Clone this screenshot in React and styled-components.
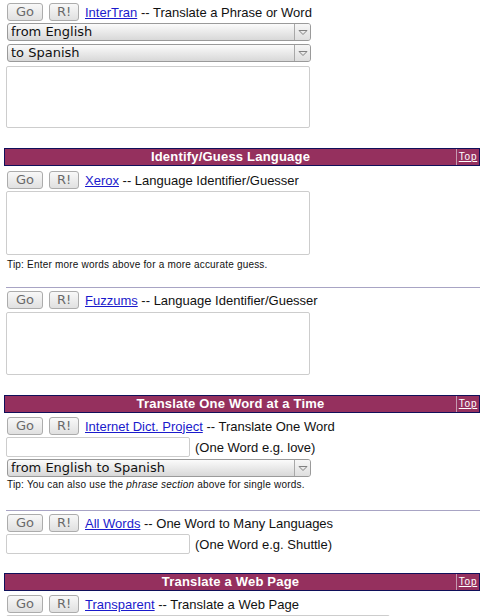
import React from "react";
import styled, { createGlobalStyle } from "styled-components";

const Global = createGlobalStyle`
  html, body { margin: 0; padding: 0; background: #ffffff; }
  body { font-family: "Liberation Sans", Arial, sans-serif; color: #000; }
`;

const Page = styled.div`
  width: 476px;
  padding: 3px 0 0 4px;
  display: flex;
  flex-direction: column;
`;

const Block = styled.div`
  display: flex;
  flex-direction: column;
  padding-left: 2px;
  margin-top: ${(p) => p.$top || 0}px;
`;

const Row = styled.div`
  display: flex;
  align-items: center;
  height: 18px;
  margin-top: ${(p) => p.$top || 0}px;
  padding-left: 1px;
  font-size: 13px;
  white-space: nowrap;
`;

const Btn = styled.button`
  box-sizing: border-box;
  width: ${(p) => p.$w}px;
  height: 18px;
  margin: 0 6px 0 0;
  padding: 0;
  border: 1px solid #acacac;
  border-radius: 3px;
  background: linear-gradient(#f8f8f8, #e0e0e0);
  color: #6a6a6a;
  font-family: "DejaVu Sans", sans-serif;
  font-weight: normal;
  font-size: 13px;
  line-height: 16px;
`;

const Link = styled.a`
  color: #1a1acc;
  text-decoration: underline;
  cursor: pointer;
`;

const Desc = styled.span`
  color: #111;
`;

const SelectBox = styled.div`
  box-sizing: border-box;
  display: flex;
  width: 304px;
  height: 18px;
  margin-top: ${(p) => p.$top || 0}px;
  margin-left: 1px;
  border: 1px solid #9a9a9a;
  border-radius: 3px;
  background: linear-gradient(#fbfbfb, #d8d8d8);
  overflow: hidden;
`;

const Select = styled.select`
  appearance: none;
  flex: 1;
  min-width: 0;
  border: 0;
  background: transparent;
  padding: 0 0 0 3px;
  margin: 0;
  font-family: "DejaVu Sans", sans-serif;
  font-size: 13px;
  line-height: 16px;
  color: #111;
  outline: none;
`;

const Arrow = styled.div`
  width: 15px;
  border-left: 1px solid #a8a8a8;
  display: flex;
  align-items: center;
  justify-content: center;
  background: linear-gradient(#f6f6f6, #dedede);
`;

const TextBox = styled.textarea`
  box-sizing: border-box;
  display: block;
  width: 304px;
  height: ${(p) => p.$h}px;
  margin: ${(p) => p.$top || 0}px 0 0 0;
  border: 1px solid #cdcdcd;
  border-radius: 2px;
  background: #fff;
  resize: none;
  padding: 2px;
`;

const WordField = styled.div`
  display: flex;
  align-items: center;
  margin-top: ${(p) => p.$top || 0}px;
  font-size: 13px;
  color: #111;
  white-space: nowrap;
`;

const Input = styled.input`
  box-sizing: border-box;
  width: ${(p) => p.$w || 184}px;
  height: 20px;
  margin: 0 5px 0 0;
  border: 1px solid #cdcdcd;
  border-radius: 2px;
  padding: 1px 3px;
  background: #fff;
`;

const Tip = styled.div`
  margin-top: ${(p) => p.$top || 0}px;
  padding-left: 1px;
  height: 12px;
  font-size: 10px;
  line-height: 12px;
  letter-spacing: 0.2px;
  color: #111;
  white-space: nowrap;
  em { font-style: italic; }
`;

const Rule = styled.div`
  height: 1px;
  margin-top: ${(p) => p.$top || 0}px;
  margin-left: 2px;
  background: #a8a4c4;
`;

const Header = styled.div`
  box-sizing: border-box;
  display: flex;
  height: 18px;
  margin-top: ${(p) => p.$top || 0}px;
  border: 1px solid #10105a;
  background: #95305e;
`;

const HeaderTitle = styled.div`
  flex: 1;
  text-align: center;
  color: #ffffff;
  font-weight: bold;
  font-size: 13px;
  line-height: 16px;
  letter-spacing: 0.2px;
`;

const HeaderTop = styled.a`
  width: 22px;
  border-left: 1px solid #c49ab0;
  color: #ffffff;
  font-size: 10px;
  line-height: 16px;
  letter-spacing: 0.8px;
  text-align: center;
  text-decoration: underline;
`;

const ArrowIcon = () => (
  <svg width="10" height="7" viewBox="0 0 10 7">
    <path d="M1 1.5 H9 L5 5.5 Z" fill="none" stroke="#808080" strokeWidth="1" />
  </svg>
);

const Dropdown = ({ top, value }) => (
  <SelectBox $top={top}>
    <Select defaultValue={value}>
      <option>{value}</option>
    </Select>
    <Arrow>
      <ArrowIcon />
    </Arrow>
  </SelectBox>
);

const Actions = ({ top, name, text }) => (
  <Row $top={top}>
    <Btn $w={36}>Go</Btn>
    <Btn $w={30}>R!</Btn>
    <Link>{name}</Link>
    <Desc>&nbsp;-- {text}</Desc>
  </Row>
);

const SectionHead = ({ top, title }) => (
  <Header $top={top}>
    <HeaderTitle>{title}</HeaderTitle>
    <HeaderTop>Top</HeaderTop>
  </Header>
);

export default function App() {
  return (
    <>
      <Global />
      <Page>
        <Block>
          <Actions name="InterTran" text="Translate a Phrase or Word" />
          <Dropdown top={2} value="from English" />
          <Dropdown top={3} value="to Spanish" />
          <TextBox $top={4} $h={62} />
        </Block>

        <SectionHead top={20} title="Identify/Guess Language" />
        <Block>
          <Actions top={5} name="Xerox" text="Language Identifier/Guesser" />
          <TextBox $top={2} $h={64} />
          <Tip $top={4}>Tip: Enter more words above for a more accurate guess.</Tip>
        </Block>
        <Rule $top={16} />
        <Block>
          <Actions top={3} name="Fuzzums" text="Language Identifier/Guesser" />
          <TextBox $top={3} $h={63} />
        </Block>

        <SectionHead top={20} title="Translate One Word at a Time" />
        <Block>
          <Actions top={4} name="Internet Dict. Project" text="Translate One Word" />
          <WordField $top={2}>
            <Input />
            (One Word e.g. love)
          </WordField>
          <Dropdown top={2} value="from English to Spanish" />
          <Tip $top={2}>
            Tip: You can also use the <em>phrase section</em> above for single words.
          </Tip>
        </Block>
        <Rule $top={19} />
        <Block>
          <Actions top={3} name="All Words" text="One Word to Many Languages" />
          <WordField $top={2}>
            <Input />
            (One Word e.g. Shuttle)
          </WordField>
        </Block>

        <SectionHead top={19} title="Translate a Web Page" />
        <Block>
          <Actions top={4} name="Transparent" text="Translate a Web Page" />
          <WordField $top={2}>
            <Input $w={384} />
          </WordField>
        </Block>
      </Page>
    </>
  );
}
